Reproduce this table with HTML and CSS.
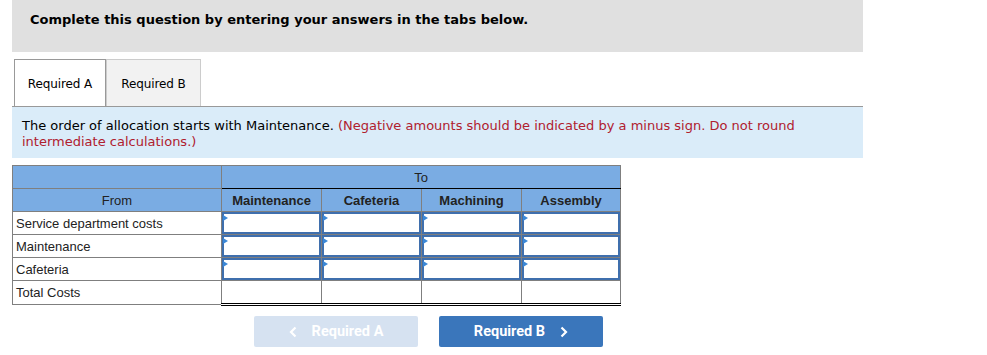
FILE: index.html
```html
<!DOCTYPE html>
<html lang="en">
<head>
    <meta charset="UTF-8">
    <title>Allocation Question</title>
    <link rel="stylesheet" href="styles.css">
</head>
<body>
    <div class="page">
        <div class="banner">Complete this question by entering your answers in the tabs below.</div>

        <!-- Tabs -->
        <div class="tabs">
            <div class="tab active">Required A</div>
            <div class="tab">Required B</div>
        </div>

        <div class="instructions">
            The order of allocation starts with Maintenance. <span class="note">(Negative amounts should be indicated by a minus sign. Do not round intermediate calculations.)</span>
        </div>

        <!-- Allocation table -->
        <table class="alloc">
            <colgroup>
                <col class="c-from">
                <col class="c-dept">
                <col class="c-dept">
                <col class="c-dept">
                <col class="c-last">
            </colgroup>
            <tr class="head-top">
                <th></th>
                <th colspan="4" class="to">To</th>
            </tr>
            <tr class="head">
                <th class="from">From</th>
                <th>Maintenance</th>
                <th>Cafeteria</th>
                <th>Machining</th>
                <th>Assembly</th>
            </tr>
            <tr>
                <td class="label">Service department costs</td>
                <td class="entry"><div class="box"></div></td>
                <td class="entry"><div class="box"></div></td>
                <td class="entry"><div class="box"></div></td>
                <td class="entry"><div class="box"></div></td>
            </tr>
            <tr>
                <td class="label">Maintenance</td>
                <td class="entry"><div class="box"></div></td>
                <td class="entry"><div class="box"></div></td>
                <td class="entry"><div class="box"></div></td>
                <td class="entry"><div class="box"></div></td>
            </tr>
            <tr>
                <td class="label">Cafeteria</td>
                <td class="entry"><div class="box"></div></td>
                <td class="entry"><div class="box"></div></td>
                <td class="entry"><div class="box"></div></td>
                <td class="entry"><div class="box"></div></td>
            </tr>
            <tr class="total">
                <td class="label">Total Costs</td>
                <td></td>
                <td></td>
                <td></td>
                <td></td>
            </tr>
        </table>

        <!-- Navigation -->
        <div class="nav">
            <button class="nav-btn prev">
                <svg class="chev" width="8" height="12" viewBox="0 0 8 12"><path d="M6.5 1.5 2 6l4.5 4.5" fill="none" stroke="currentColor" stroke-width="2.2"/></svg>
                Required A
            </button>
            <button class="nav-btn next">
                Required B
                <svg class="chev" width="8" height="12" viewBox="0 0 8 12"><path d="M1.5 1.5 6 6l-4.5 4.5" fill="none" stroke="currentColor" stroke-width="2.2"/></svg>
            </button>
        </div>
    </div>
</body>
</html>
```

FILE: styles.css
```css
body {
    margin: 0;
    background: #fff;
    color: #000;
}

.page {
    width: 851px;
    padding: 0 12px;
}

.banner {
    background: #e0e0e0;
    height: 52px;
    box-sizing: border-box;
    padding: 12px 18px 0;
    font-family: 'DejaVu Sans', Verdana, sans-serif;
    font-weight: bold;
    font-size: 13px;
}

/* Tabs */
.tabs {
    display: flex;
    margin-top: 7px;
    padding-left: 2px;
    border-bottom: 1px solid #999;
}

.tab {
    width: 92px;
    height: 47px;
    box-sizing: border-box;
    border: 1px solid #ccc;
    border-bottom: none;
    background: #f2f2f2;
    font-family: 'DejaVu Sans', Verdana, sans-serif;
    font-size: 12px;
    letter-spacing: -0.1px;
    display: flex;
    align-items: center;
    justify-content: center;
    padding-top: 1px;
}

.tab + .tab {
    width: 95px;
}

.tab.active {
    background: #fff;
    border-color: #999;
}

.instructions {
    background: #daecf9;
    height: 51px;
    box-sizing: border-box;
    padding: 11px 60px 0 10px;
    font-family: 'DejaVu Sans', Verdana, sans-serif;
    font-size: 13px;
    line-height: 16px;
}

.note {
    color: #b0202e;
}

/* Table */
.alloc {
    margin-top: 7px;
    border-collapse: collapse;
    table-layout: fixed;
    width: 609px;
    font-family: 'Liberation Sans', Arial, sans-serif;
    font-size: 13px;
    border: 1px solid #7f7f7f;
}

.c-from { width: 209px; }
.c-dept { width: 100px; }
.c-last { width: 99px; }

.alloc th {
    background: #7aace3;
    border: 1px solid #7f7f7f;
    font-weight: bold;
    height: 22px;
    padding: 0;
    color: #222;
}

.head-top th {
    height: 22px;
    font-weight: normal;
    border-bottom: 1px solid #7f7f7f;
}

.head-top th.to {
    border-bottom: 1px solid #000;
}

.alloc th.from {
    font-weight: normal;
}

.alloc td {
    border: 1px solid #7f7f7f;
    height: 22px;
    padding: 0;
}

.alloc td.label {
    padding-left: 3px;
    color: #222;
}

.alloc td.entry {
    position: relative;
}

.box {
    height: 22px;
    box-sizing: border-box;
    border: 2px solid #3f6fad;
    background: #fff;
}

/* little marker in the corner of each answer cell */
.entry::before {
    content: '';
    position: absolute;
    left: 1px;
    top: 3px;
    border-left: 5px solid #3a87d6;
    border-top: 3px solid transparent;
    border-bottom: 3px solid transparent;
}

.total td {
    border-top: 1px solid #000;
}

.total td:not(.label) {
    border-bottom: 3px double #000;
}

/* Navigation buttons */
.nav {
    display: flex;
    gap: 21px;
    margin-top: 10px;
    padding-left: 242px;
}

.nav-btn {
    width: 164px;
    height: 31px;
    border: none;
    border-radius: 2px;
    font-family: Roboto, 'Liberation Sans', sans-serif;
    font-weight: bold;
    font-size: 14.5px;
    color: #fff;
    display: flex;
    align-items: center;
    justify-content: center;
    gap: 15px;
    padding: 0;
}

.nav-btn.prev {
    background: #d6e2f1;
}

.nav-btn.next {
    background: #3a76bb;
}
```
